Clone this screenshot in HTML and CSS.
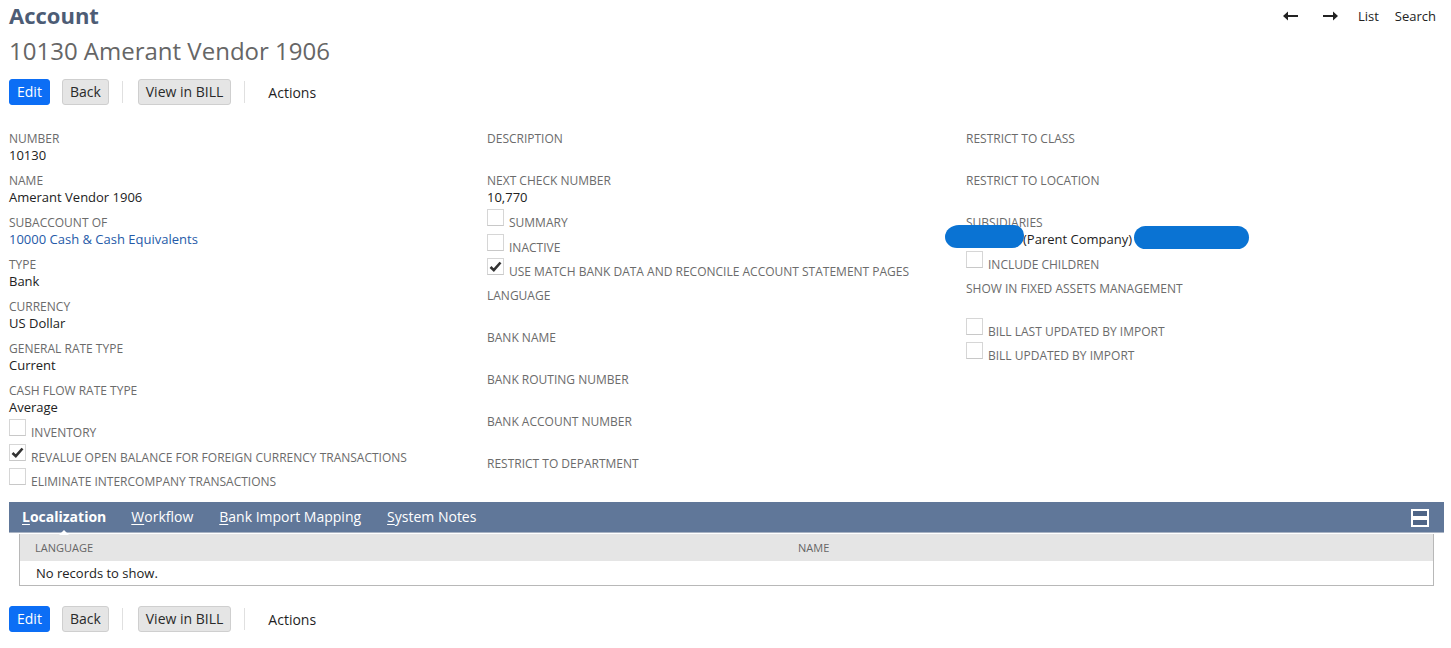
FILE: index.html
```html
<!DOCTYPE html>
<html>
<head>
<meta charset="utf-8">
<link rel="stylesheet" href="styles.css">
</head>
<body>
<div class="page">
  <header class="top">
    <div class="titles">
      <div class="rectype">Account</div>
      <div class="recname">10130 Amerant Vendor 1906</div>
    </div>
    <nav class="topnav">
      <span class="arrow"><svg width="15" height="10" viewBox="0 0 15 10"><path d="M15 5H3" stroke="#222" stroke-width="2"/><path d="M0 5L5 0.5V9.5Z" fill="#222"/></svg></span>
      <span class="arrow"><svg width="15" height="10" viewBox="0 0 15 10"><path d="M0 5H12" stroke="#222" stroke-width="2"/><path d="M15 5L10 0.5V9.5Z" fill="#222"/></svg></span>
      <span class="navlink">List</span>
      <span class="navlink">Search</span>
    </nav>
  </header>

  <div class="btnbar">
    <button class="btn primary">Edit</button>
    <button class="btn">Back</button>
    <span class="sep"></span>
    <button class="btn">View in BILL</button>
    <span class="sep"></span>
    <span class="actions">Actions</span>
  </div>

  <div class="fields">
    <div class="col">
      <div class="field"><div class="lbl">Number</div><div class="val">10130</div></div>
      <div class="field"><div class="lbl">Name</div><div class="val">Amerant Vendor 1906</div></div>
      <div class="field"><div class="lbl">Subaccount of</div><div class="val link">10000 Cash &amp; Cash Equivalents</div></div>
      <div class="field"><div class="lbl">Type</div><div class="val">Bank</div></div>
      <div class="field"><div class="lbl">Currency</div><div class="val">US Dollar</div></div>
      <div class="field"><div class="lbl">General Rate Type</div><div class="val">Current</div></div>
      <div class="field"><div class="lbl">Cash Flow Rate Type</div><div class="val">Average</div></div>
      <div class="chk"><span class="box"></span><span class="clbl">Inventory</span></div>
      <div class="chk"><span class="box checked"><svg width="15" height="15" viewBox="0 0 15 15"><path d="M2.5 8L5.8 11.2L12.5 3.5" stroke="#333" stroke-width="2.6" fill="none"/></svg></span><span class="clbl">Revalue open balance for foreign currency transactions</span></div>
      <div class="chk"><span class="box"></span><span class="clbl">Eliminate intercompany transactions</span></div>
    </div>
    <div class="col">
      <div class="field"><div class="lbl">Description</div><div class="val"></div></div>
      <div class="field"><div class="lbl">Next Check Number</div><div class="val">10,770</div></div>
      <div class="chk"><span class="box"></span><span class="clbl">Summary</span></div>
      <div class="chk"><span class="box"></span><span class="clbl">Inactive</span></div>
      <div class="chk"><span class="box checked"><svg width="15" height="15" viewBox="0 0 15 15"><path d="M2.5 8L5.8 11.2L12.5 3.5" stroke="#333" stroke-width="2.6" fill="none"/></svg></span><span class="clbl">Use Match Bank Data and Reconcile Account Statement pages</span></div>
      <div class="field"><div class="lbl">Language</div><div class="val"></div></div>
      <div class="field"><div class="lbl">Bank Name</div><div class="val"></div></div>
      <div class="field"><div class="lbl">Bank Routing Number</div><div class="val"></div></div>
      <div class="field"><div class="lbl">Bank Account Number</div><div class="val"></div></div>
      <div class="field"><div class="lbl">Restrict to Department</div><div class="val"></div></div>
    </div>
    <div class="col">
      <div class="field"><div class="lbl">Restrict to Class</div><div class="val"></div></div>
      <div class="field"><div class="lbl">Restrict to Location</div><div class="val"></div></div>
      <div class="field subs"><div class="lbl">Subsidiaries</div><div class="val subsval">(Parent Company)</div><span class="blob b1"></span><span class="blob b2"></span></div>
      <div class="chk"><span class="box"></span><span class="clbl">Include Children</span></div>
      <div class="field"><div class="lbl">Show in Fixed Assets Management</div><div class="val"></div></div>
      <div class="chk"><span class="box"></span><span class="clbl">BILL Last Updated By Import</span></div>
      <div class="chk"><span class="box"></span><span class="clbl">BILL Updated By Import</span></div>
    </div>
  </div>

  <div class="tabs">
    <div class="tabbar">
      <span class="tab active"><u>L</u>ocalization<span class="caret"></span></span>
      <span class="tab"><u>W</u>orkflow</span>
      <span class="tab"><u>B</u>ank Import Mapping</span>
      <span class="tab"><u>S</u>ystem Notes</span>
      <span class="tabicon"><svg width="18" height="18" viewBox="0 0 18 18"><rect x="1" y="1" width="16" height="7" fill="#4f6587" stroke="#fff" stroke-width="2"/><rect x="1" y="10" width="16" height="7" fill="#4f6587" stroke="#fff" stroke-width="2"/></svg></span>
    </div>
    <div class="sublist">
      <div class="shead"><span class="c1">Language</span><span class="c2">Name</span></div>
      <div class="srow">No records to show.</div>
    </div>
  </div>

  <div class="btnbar bottom">
    <button class="btn primary">Edit</button>
    <button class="btn">Back</button>
    <span class="sep"></span>
    <button class="btn">View in BILL</button>
    <span class="sep"></span>
    <span class="actions">Actions</span>
  </div>
</div>
</body>
</html>
```

FILE: styles.css
```css
* { box-sizing: border-box; }
html, body { margin: 0; padding: 0; background: #fff; }
body { font-family: "Open Sans", "Liberation Sans", sans-serif; color: #222; }
.page { padding: 0 7px 0 9px; }

.top { display: flex; justify-content: space-between; align-items: flex-start; }
.rectype { font-size: 22px; font-weight: 700; color: #4d5c75; line-height: 30px; }
.recname { font-size: 24px; color: #666; line-height: 34px; margin-top: 4px; }
.topnav { display: flex; align-items: center; height: 32px; padding-right: 8px; }
.arrow { display: inline-flex; width: 15px; margin-right: 25px; }
.arrow + .arrow { margin-right: 20px; }
.navlink { font-size: 13px; color: #222; }
.navlink + .navlink { margin-left: 16px; }

.btnbar { display: flex; align-items: center; margin-top: 11px; height: 26px; }
.btn { font-family: inherit; font-size: 14px; font-weight: 400; color: #2a2a2a; background: #e5e5e5; border: 1px solid #cfcfcf; border-radius: 3px; height: 26px; padding: 0 7px; margin: 0 12px 0 0; line-height: 24px; }
.btn.primary { background: #0c6ef5; border-color: #0c6ef5; color: #fff; }
.sep { width: 1px; height: 22px; background: #e0e0e0; margin: 0 15px 0 1px; }
.actions { font-size: 14px; font-weight: 400; color: #1f1f1f; margin-left: 8px; }

.fields { display: grid; grid-template-columns: 478px 479px 1fr; margin-top: 24.5px; }
.field { margin-top: 8px; }
.col > .field:first-child { margin-top: 0; }
.lbl { font-size: 12px; line-height: 17px; color: #6b6b6b; text-transform: uppercase; }
.val { font-size: 13px; line-height: 17px; min-height: 17px; color: #222; }
.val.link { color: #255aa8; }
.chk { display: flex; align-items: flex-start; height: 24.5px; }
.box { width: 17px; height: 17px; margin-top: 3.5px; border: 1px solid #d6d6d6; border-bottom-color: #c8c8c8; background: #fff; display: inline-flex; align-items: center; justify-content: center; }
.clbl { font-size: 12px; line-height: 17px; margin-top: 8.5px; margin-left: 5px; color: #6b6b6b; text-transform: uppercase; }

.subs { position: relative; }
.subsval { padding-left: 57px; }
.blob { position: absolute; background: #0a73d3; }
.b1 { left: -21px; top: 11.5px; width: 79px; height: 23px; border-radius: 14px 10px 12px 12px / 12px 10px 12px 11px; }
.b2 { left: 168px; top: 12.5px; width: 115px; height: 23px; border-radius: 12px; }

.tabs { margin-top: 13px; }
.tabbar { position: relative; display: flex; align-items: center; height: 31px; background: #607799; padding-left: 13px; border-bottom: 1px solid #a9b3c3; }
.tab { position: relative; font-size: 14px; color: #fff; margin-right: 26px; line-height: 20px; }
.tab.active { font-weight: 700; margin-right: 25px; }
.tab u { text-decoration: underline; text-underline-offset: 2px; }
.caret { position: absolute; left: 50%; bottom: -8px; margin-left: -5px; width: 0; height: 0; border-left: 5px solid transparent; border-right: 5px solid transparent; border-bottom: 5px solid #fff; }
.tabicon { position: absolute; right: 15px; top: 7px; display: flex; }
.sublist { margin: 0 10px; border: 1px solid #b8b8b8; border-top: none; }
.shead { display: grid; grid-template-columns: 778px 1fr; background: #e5e5e5; height: 27px; align-items: center; margin-top: 1px; }
.shead span { font-size: 11px; color: #666; text-transform: uppercase; }
.shead .c1 { padding-left: 15px; }
.srow { font-size: 13px; height: 24px; line-height: 24px; padding-left: 16px; color: #222; }

.btnbar.bottom { margin-top: 20px; }
```
